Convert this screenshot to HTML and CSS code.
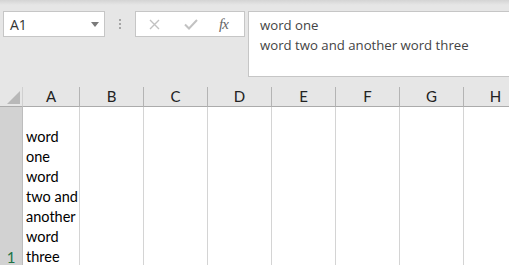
FILE: index.html
```html
<!DOCTYPE html>
<html lang="en">
<head>
    <meta charset="UTF-8">
    <meta name="viewport" content="width=device-width, initial-scale=1.0">
    <title>Sheet</title>
    <link rel="stylesheet" href="styles.css">
</head>
<body>
    <div class="formula-row">
        <div class="name-box">
            <span class="cell-ref">A1</span>
            <svg class="drop" width="8" height="5" viewBox="0 0 8 5"><polygon points="0,0 8,0 4,5" fill="#7a7a7a"/></svg>
        </div>
        <div class="grip">
            <span></span><span></span><span></span>
        </div>
        <div class="fx-buttons">
            <svg class="btn-icon" width="11" height="11" viewBox="0 0 11 11">
                <path d="M1 1 L10 10 M10 1 L1 10" stroke="#c2c2c2" stroke-width="1.4" fill="none"/>
            </svg>
            <svg class="btn-icon" width="14" height="11" viewBox="0 0 14 11">
                <path d="M1 5.5 L5 9.5 L13 1" stroke="#c2c2c2" stroke-width="2" fill="none"/>
            </svg>
            <span class="fx">fx</span>
        </div>
        <div class="formula-input">
            word one<br>
            word two and another word three
        </div>
    </div>

    <div class="sheet">
        <div class="corner">
            <svg width="13" height="13" viewBox="0 0 13 13"><polygon points="13,0 13,13 0,13" fill="#b8b8b8"/></svg>
        </div>
        <div class="col-head">A</div>
        <div class="col-head">B</div>
        <div class="col-head">C</div>
        <div class="col-head">D</div>
        <div class="col-head">E</div>
        <div class="col-head">F</div>
        <div class="col-head">G</div>
        <div class="col-head">H</div>

        <div class="row-head">1</div>
        <div class="cell wrap">word<br>one<br>word<br>two and<br>another<br>word<br>three</div>
        <div class="cell"></div>
        <div class="cell"></div>
        <div class="cell"></div>
        <div class="cell"></div>
        <div class="cell"></div>
        <div class="cell"></div>
        <div class="cell"></div>
    </div>
</body>
</html>
```

FILE: styles.css
```css
html, body {
    margin: 0;
    padding: 0;
    width: 509px;
    height: 265px;
    overflow: hidden;
    background-color: #e6e6e6;
}
.formula-row {
    display: flex;
    align-items: flex-start;
    height: 87px;
    padding: 11px 0 0 3px;
    box-sizing: border-box;
    background: linear-gradient(#d4d4d4, #e6e6e6 5px);
}
.name-box {
    width: 102px;
    height: 26px;
    box-sizing: border-box;
    border: 1px solid #c6c6c6;
    background-color: #fff;
    display: flex;
    align-items: center;
    justify-content: space-between;
    padding: 0 5px 0 6px;
}
.cell-ref {
    font-family: "Open Sans", sans-serif;
    font-size: 14px;
    color: #333;
}
.grip {
    width: 30px;
    height: 26px;
    display: flex;
    flex-direction: column;
    align-items: center;
    justify-content: center;
    gap: 2px;
}
.grip span {
    width: 2px;
    height: 2px;
    background-color: #a6a6a6;
}
.fx-buttons {
    width: 110px;
    height: 26px;
    box-sizing: border-box;
    border: 1px solid #c6c6c6;
    background-color: #fff;
    display: flex;
    align-items: center;
    padding: 0 0 0 13px;
}
.btn-icon {
    margin-right: 24px;
}
.btn-icon + .btn-icon {
    margin-right: 21px;
}
.fx {
    font-family: "Liberation Serif", serif;
    font-style: italic;
    font-size: 15px;
    color: #666;
    letter-spacing: -1px;
}
.formula-input {
    flex: 1;
    margin-left: 3px;
    margin-right: -2px;
    height: 66px;
    box-sizing: border-box;
    border: 1px solid #c6c6c6;
    background-color: #fff;
    padding: 3px 0 0 11px;
    font-family: "Open Sans", sans-serif;
    font-size: 13.2px;
    line-height: 20px;
    color: #444;
    white-space: nowrap;
}
.sheet {
    display: grid;
    grid-template-columns: 23px 57px repeat(7, 64px);
    grid-template-rows: 20px 170px;
    font-family: Lato, sans-serif;
    font-size: 15px;
    color: #000;
}
.corner {
    border-right: 1px solid #d0d0d0;
    border-bottom: 1px solid #ababab;
    display: flex;
    align-items: flex-end;
    justify-content: flex-end;
    padding: 0 2px 2px 0;
}
.col-head {
    border-right: 1px solid #b4b4b4;
    border-bottom: 1px solid #ababab;
    text-align: center;
    line-height: 19px;
    color: #222;
}
.row-head {
    background-color: #d2d2d2;
    border-right: 1px solid #bdbdbd;
    text-align: center;
    color: #217346;
    padding-top: 140px;
    line-height: 20px;
}
.cell {
    background-color: #fff;
    border-right: 1px solid #d4d4d4;
}
.wrap {
    padding: 20px 0 0 3px;
    font-size: 14.5px;
    line-height: 20px;
    white-space: nowrap;
}
```
